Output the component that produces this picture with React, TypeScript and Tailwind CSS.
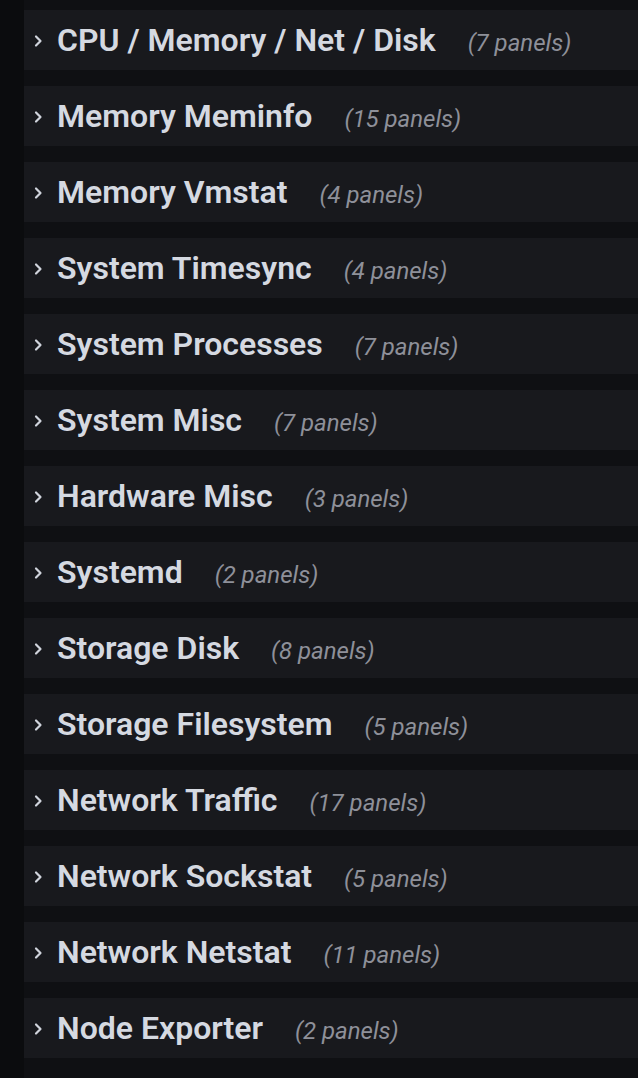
import React from 'react';

const rows: { title: string; count: number }[] = [
  { title: 'CPU / Memory / Net / Disk', count: 7 },
  { title: 'Memory Meminfo', count: 15 },
  { title: 'Memory Vmstat', count: 4 },
  { title: 'System Timesync', count: 4 },
  { title: 'System Processes', count: 7 },
  { title: 'System Misc', count: 7 },
  { title: 'Hardware Misc', count: 3 },
  { title: 'Systemd', count: 2 },
  { title: 'Storage Disk', count: 8 },
  { title: 'Storage Filesystem', count: 5 },
  { title: 'Network Traffic', count: 17 },
  { title: 'Network Sockstat', count: 5 },
  { title: 'Network Netstat', count: 11 },
  { title: 'Node Exporter', count: 2 },
];

const Chevron: React.FC = () => (
  <svg width="10" height="14" viewBox="0 0 10 14" className="mt-[2px] shrink-0 text-[#d0d4dc]">
    <path d="M3 2.5 L7.5 7 L3 11.5" fill="none" stroke="currentColor" strokeWidth="2.2" strokeLinecap="round" strokeLinejoin="round" />
  </svg>
);

const App: React.FC = () => {
  return (
    <div
      className="flex min-h-[1078px] w-[638px] overflow-hidden bg-[#0f1013]"
      style={{ fontFamily: 'Roboto, "Liberation Sans", sans-serif' }}
    >
      {/* left rail */}
      <div className="w-6 shrink-0 bg-[#0b0c0e]" />

      <div className="flex flex-1 flex-col gap-4 pt-[10px]">
        {rows.map((r) => (
          <div key={r.title} className="flex h-[60px] items-center bg-[#18191d] pl-[9px]">
            <Chevron />
            <div className="ml-[14px] flex items-baseline whitespace-nowrap">
              <span className="text-[32px] font-semibold leading-none text-[#d5d9e1]">{r.title}</span>
              <span className="ml-8 text-[24px] italic leading-none text-[#8e9099]">
                ({r.count} panels)
              </span>
            </div>
          </div>
        ))}
      </div>
    </div>
  );
};

export default App;
